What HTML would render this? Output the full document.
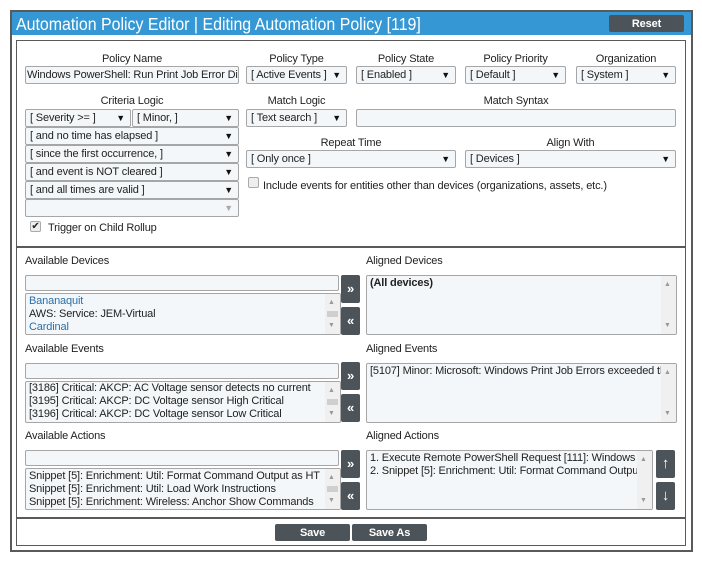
<!DOCTYPE html>
<html><head><meta charset="utf-8"><style>
*{box-sizing:border-box;margin:0;padding:0}
body{width:702px;height:562px;background:#fff;font-family:"Liberation Sans",Arial,sans-serif;font-size:11px;color:#222;position:relative;overflow:hidden;letter-spacing:-0.15px}
.a{position:absolute}
.outer{left:10px;top:10px;width:683px;height:542px;border:2px solid #5a5a5a}
.hdr{left:12px;top:12px;width:679px;height:23px;background:#3598d4}
.title{left:16px;top:13px;color:#fff;font-size:17.5px;line-height:22px;transform:scaleX(0.91);transform-origin:left;letter-spacing:0}
.btn{background:#4c5459;color:#fff;font-weight:bold;border-radius:2px;text-align:center;font-size:11px}
.panel{border:1.5px solid #5a5a5a}
.lbl{text-align:center;font-size:11px;white-space:nowrap}
.sel,.inp{background:#f4f7f9;border:1px solid #a6a6a6;border-radius:2px;height:18px;line-height:16px;padding-left:4px;white-space:nowrap;overflow:hidden;font-size:11px}
.sel:after{content:"▼";position:absolute;right:5px;top:0;font-size:9px;color:#111}
.dis{color:#aaa}.dis:after{color:#aaa}
.box{background:#f4f7f9;border:1px solid #a6a6a6;border-radius:2px;padding:0 0 0 3px;line-height:13px;white-space:nowrap;overflow:hidden;font-size:11px}
.sb{position:absolute;right:0;top:0;bottom:0;width:15px;background:#f0f0f0}
.sb:before{content:"▲";position:absolute;top:2px;left:3px;font-size:7px;color:#999}
.sb:after{content:"▼";position:absolute;bottom:2px;left:3px;font-size:7px;color:#999}
.thumb{position:absolute;right:2px;top:17px;width:11px;height:6px;background:#cfcfcf}
.mv{width:19px;height:28px;background:#4c5459;color:#fff;border-radius:2px;text-align:center;line-height:28px;font-size:13px;font-weight:bold}
.blue{color:#2a6fa8}
.cb{width:11px;height:11px;border:1px solid #aaa;background:#eee;border-radius:2px}
</style></head><body>
<div class="a outer"></div>
<div class="a hdr"></div>
<div class="a title">Automation Policy Editor | Editing Automation Policy [119]</div>
<div class="a btn" style="left:609px;top:15px;width:75px;height:17px;line-height:18px">Reset</div>

<div class="a panel" style="left:16px;top:40px;width:670px;height:506px"></div>
<div class="a" style="left:17px;top:246px;width:668px;height:2px;background:#5a5a5a"></div>
<div class="a" style="left:17px;top:517px;width:668px;height:2px;background:#5a5a5a"></div>

<div class="a lbl" style="left:25px;top:53px;width:214px">Policy Name</div>
<div class="a lbl" style="left:246px;top:53px;width:101px">Policy Type</div>
<div class="a lbl" style="left:356px;top:53px;width:100px">Policy State</div>
<div class="a lbl" style="left:465px;top:53px;width:101px">Policy Priority</div>
<div class="a lbl" style="left:576px;top:53px;width:100px">Organization</div>

<div class="a inp" style="left:25px;top:66px;width:214px;padding-left:1px">Windows PowerShell: Run Print Job Error Di</div>
<div class="a sel" style="left:246px;top:66px;width:101px">[ Active Events ]</div>
<div class="a sel" style="left:356px;top:66px;width:100px">[ Enabled ]</div>
<div class="a sel" style="left:465px;top:66px;width:101px">[ Default ]</div>
<div class="a sel" style="left:576px;top:66px;width:100px">[ System ]</div>

<div class="a lbl" style="left:25px;top:95px;width:214px">Criteria Logic</div>
<div class="a lbl" style="left:246px;top:95px;width:101px">Match Logic</div>
<div class="a lbl" style="left:356px;top:95px;width:320px">Match Syntax</div>

<div class="a sel" style="left:25px;top:109px;width:106px">[ Severity &gt;= ]</div>
<div class="a sel" style="left:132px;top:109px;width:107px">[ Minor, ]</div>
<div class="a sel" style="left:246px;top:109px;width:101px">[ Text search ]</div>
<div class="a inp" style="left:356px;top:109px;width:320px"></div>
<div class="a sel" style="left:25px;top:127px;width:214px">[ and no time has elapsed ]</div>
<div class="a sel" style="left:25px;top:145px;width:214px">[ since the first occurrence, ]</div>
<div class="a sel" style="left:25px;top:163px;width:214px">[ and event is NOT cleared ]</div>
<div class="a sel" style="left:25px;top:181px;width:214px">[ and all times are valid ]</div>
<div class="a sel dis" style="left:25px;top:199px;width:214px"></div>

<div class="a lbl" style="left:246px;top:137px;width:210px">Repeat Time</div>
<div class="a lbl" style="left:465px;top:137px;width:211px">Align With</div>
<div class="a sel" style="left:246px;top:150px;width:210px">[ Only once ]</div>
<div class="a sel" style="left:465px;top:150px;width:211px">[ Devices ]</div>
<div class="a cb" style="left:248px;top:177px"></div>
<div class="a" style="left:263px;top:180px">Include events for entities other than devices (organizations, assets, etc.)</div>
<div class="a cb" style="left:30px;top:221px;font-size:10px;line-height:9px;text-align:center">✔</div>
<div class="a" style="left:48px;top:222px">Trigger on Child Rollup</div>

<div class="a" style="left:25px;top:255px">Available Devices</div>
<div class="a" style="left:366px;top:255px">Aligned Devices</div>
<div class="a inp" style="left:25px;top:275px;width:314px;height:16px"></div>
<div class="a box" style="left:25px;top:293px;width:316px;height:42px;padding-top:1px"><div class="blue">Bananaquit</div><div>AWS: Service: JEM-Virtual</div><div class="blue">Cardinal</div><div class="sb"><div class="thumb"></div></div></div>
<div class="a mv" style="left:341px;top:275px">»</div>
<div class="a mv" style="left:341px;top:307px">«</div>
<div class="a box" style="left:366px;top:275px;width:311px;height:60px;font-weight:bold;padding-top:1px">(All devices)<div class="sb"></div></div>

<div class="a" style="left:25px;top:343px">Available Events</div>
<div class="a" style="left:366px;top:343px">Aligned Events</div>
<div class="a inp" style="left:25px;top:363px;width:314px;height:16px"></div>
<div class="a box" style="left:25px;top:381px;width:316px;height:42px;padding-top:0px"><div>[3186] Critical: AKCP: AC Voltage sensor detects no current</div><div>[3195] Critical: AKCP: DC Voltage sensor High Critical</div><div>[3196] Critical: AKCP: DC Voltage sensor Low Critical</div><div class="sb"><div class="thumb"></div></div></div>
<div class="a mv" style="left:341px;top:362px">»</div>
<div class="a mv" style="left:341px;top:394px">«</div>
<div class="a box" style="left:366px;top:363px;width:311px;height:60px;padding-top:1px">[5107] Minor: Microsoft: Windows Print Job Errors exceeded th<div class="sb"></div></div>

<div class="a" style="left:25px;top:430px">Available Actions</div>
<div class="a" style="left:366px;top:430px">Aligned Actions</div>
<div class="a inp" style="left:25px;top:450px;width:314px;height:16px"></div>
<div class="a box" style="left:25px;top:468px;width:316px;height:42px;padding-top:1px"><div>Snippet [5]: Enrichment: Util: Format Command Output as HT</div><div>Snippet [5]: Enrichment: Util: Load Work Instructions</div><div>Snippet [5]: Enrichment: Wireless: Anchor Show Commands</div><div class="sb"><div class="thumb"></div></div></div>
<div class="a mv" style="left:341px;top:450px">»</div>
<div class="a mv" style="left:341px;top:482px">«</div>
<div class="a box" style="left:366px;top:450px;width:287px;height:60px;padding-top:1px"><div>1. Execute Remote PowerShell Request [111]: Windows</div><div>2. Snippet [5]: Enrichment: Util: Format Command Outpu</div><div class="sb"></div></div>
<div class="a mv" style="left:656px;top:450px;font-size:15px;font-weight:normal">↑</div>
<div class="a mv" style="left:656px;top:482px;font-size:15px;font-weight:normal">↓</div>

<div class="a btn" style="left:275px;top:524px;width:75px;height:17px;line-height:18px">Save</div>
<div class="a btn" style="left:352px;top:524px;width:75px;height:17px;line-height:18px">Save As</div>
</body></html>
